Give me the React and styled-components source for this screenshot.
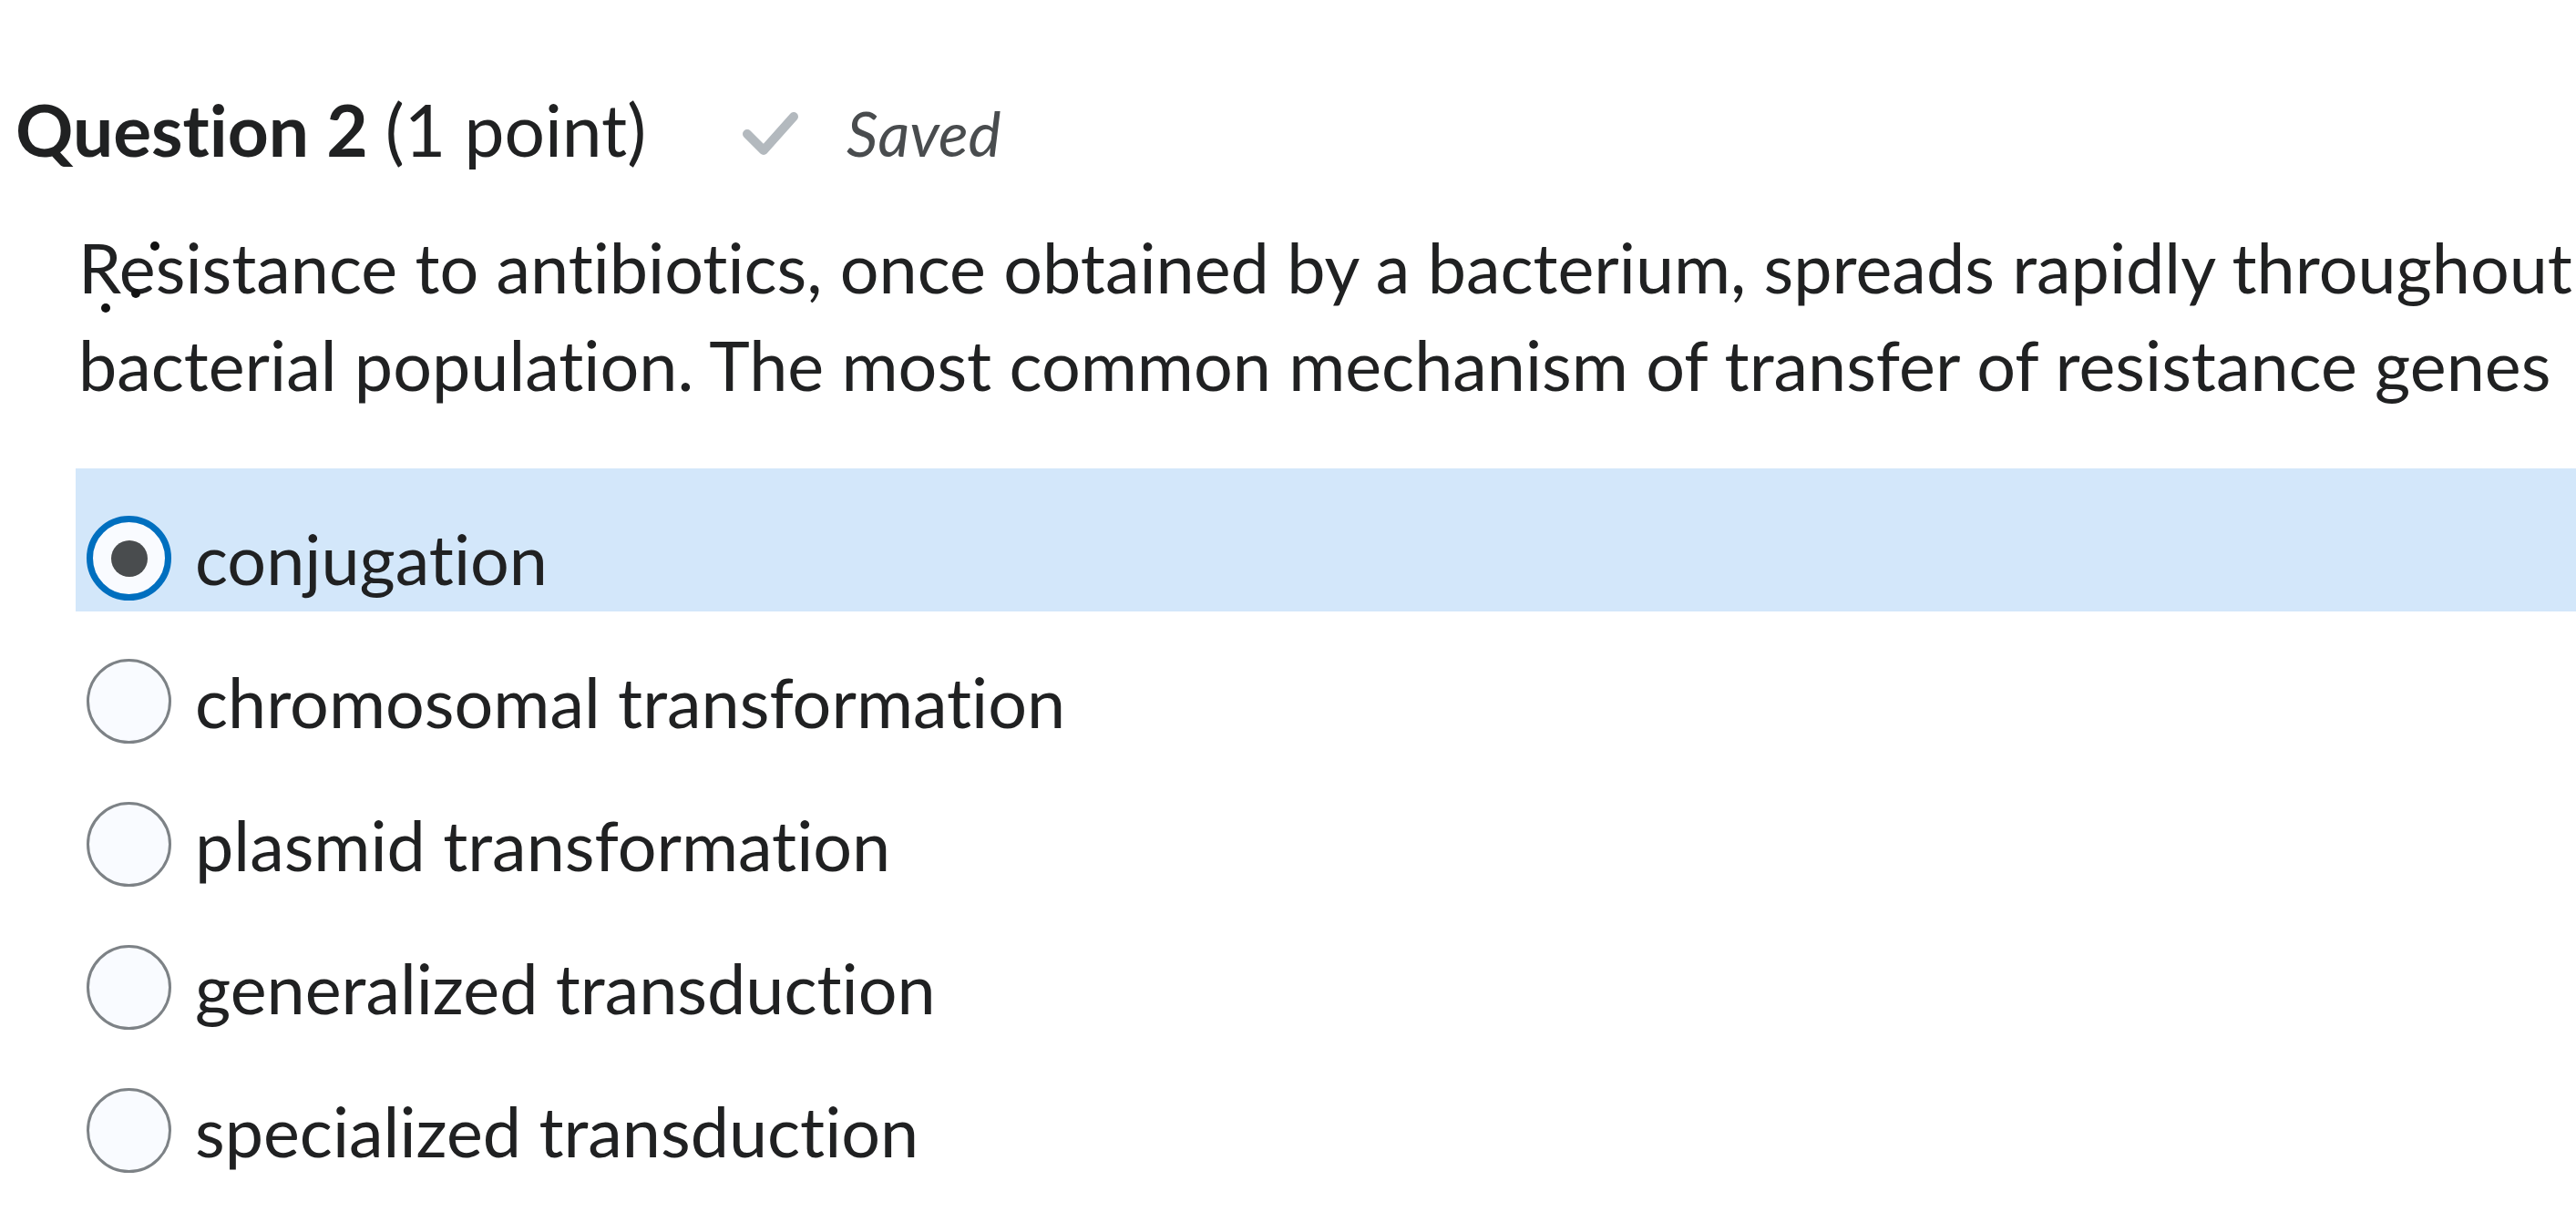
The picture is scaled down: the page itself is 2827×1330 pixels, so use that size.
import styled, { createGlobalStyle } from 'styled-components'

const GlobalStyle = createGlobalStyle`
  html, body {
    margin: 0;
    padding: 0;
    background: #ffffff;
    overflow: hidden;
  }
  body {
    font-family: Lato, "Open Sans", sans-serif;
    font-variant-ligatures: none;
    color: #202122;
  }
`

const Page = styled.div`
  width: 3200px;
  padding: 95px 0 0 17px;
  box-sizing: border-box;
`

const Header = styled.div`
  display: flex;
  align-items: baseline;
  font-size: 78.5px;
  line-height: 1.2;
`

const Title = styled.h2`
  margin: 0;
  font-size: inherit;
  font-weight: 700;
  color: #202122;
`

const Points = styled.span`
  font-weight: 400;
`

const SavedBox = styled.div`
  display: flex;
  align-items: center;
  margin-left: 104px;
  gap: 52px;
  align-self: center;
  padding-top: 8px;
`

const SavedText = styled.span`
  font-style: italic;
  font-size: 68px;
  color: #494c4e;
`

const Body = styled.div`
  padding-left: 69px;
`

const Prompt = styled.p`
  position: relative;
  margin: 50px 0 61px;
  font-size: 75.5px;
  line-height: 107px;
  white-space: nowrap;
`

const Dot = styled.span`
  position: absolute;
  width: 10px;
  height: 10px;
  border-radius: 50%;
  background: #111;
`

const Options = styled.div`
  display: flex;
  flex-direction: column;
  margin-left: -3px;
`

const Option = styled.label`
  display: flex;
  align-items: center;
  gap: 26px;
  height: 157px;
  box-sizing: border-box;
  padding: 40px 0 0 12px;
  background: ${p => (p.$selected ? '#d3e7fa' : 'transparent')};
  font-size: 75.5px;
  color: #202122;
`

const Radio = styled.span`
  flex: none;
  width: 93px;
  height: 93px;
  box-sizing: border-box;
  border-radius: 50%;
  background: #f9fbff;
  border: ${p => (p.$checked ? '7px solid #006fbf' : '3px solid #7d8286')};
  display: flex;
  align-items: center;
  justify-content: center;
  &::after {
    content: '';
    display: ${p => (p.$checked ? 'block' : 'none')};
    width: 40px;
    height: 40px;
    border-radius: 50%;
    background: #494c4e;
  }
`

function Check() {
  return (
    <svg width="64" height="52" viewBox="0 0 64 52">
      <path
        d="M7 27 L25 45 L58 8"
        fill="none"
        stroke="#b3b9be"
        strokeWidth="10"
        strokeLinecap="round"
        strokeLinejoin="round"
      />
    </svg>
  )
}

const answers = [
  'conjugation',
  'chromosomal transformation',
  'plasmid transformation',
  'generalized transduction',
  'specialized transduction'
]

export default function App() {
  return (
    <>
      <GlobalStyle />
      <Page>
        <Header>
          <Title>
            Question 2 <Points>(1 point)</Points>
          </Title>
          <SavedBox>
            <Check />
            <SavedText>Saved</SavedText>
          </SavedBox>
        </Header>
        <Body>
          <Prompt>
            Resistance to antibiotics, once obtained by a bacterium, spreads rapidly throughout
            <br />
            bacterial population. The most common mechanism of transfer of resistance genes
            <Dot style={{ left: 79, top: 26 }} />
            <Dot style={{ left: 58, top: 78 }} />
            <Dot style={{ left: 25, top: 94 }} />
          </Prompt>
          <Options>
            {answers.map((a, i) => (
              <Option key={a} $selected={i === 0}>
                <Radio $checked={i === 0} />
                {a}
              </Option>
            ))}
          </Options>
        </Body>
      </Page>
    </>
  )
}
